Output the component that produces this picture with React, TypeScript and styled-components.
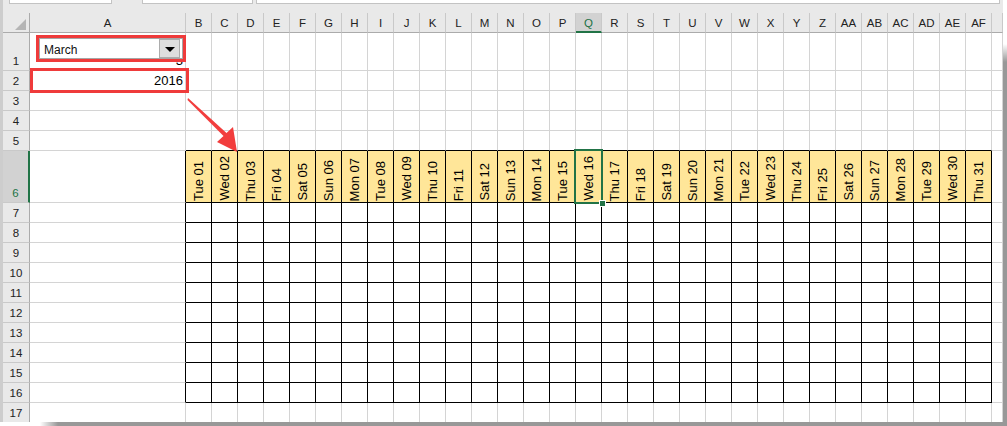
import React from "react";
import styled, { createGlobalStyle } from "styled-components";

const GlobalStyle = createGlobalStyle`
  html, body {
    margin: 0;
    padding: 0;
    background: #fff;
  }
  body {
    font-family: "Liberation Sans", Arial, sans-serif;
  }
`;

const LETTERS = "ABCDEFGHIJKLMNOPQRSTUVWXYZ".split("");
const COLUMNS = [...LETTERS, "AA", "AB", "AC", "AD", "AE", "AF", ""];
const ROWS = Array.from({ length: 17 }, (_, i) => i + 1);
const WEEKDAYS = ["Sun", "Mon", "Tue", "Wed", "Thu", "Fri", "Sat"];

// March 1st 2016 was a Tuesday
const dayLabel = (day: number) =>
  `${WEEKDAYS[(day + 1) % 7]} ${String(day).padStart(2, "0")}`;

const GRID = "#d4d4d4";
const INK = "#000";
const GREEN = "#217346";
const RED = "#ef3b3b";

const Frame = styled.div`
  position: relative;
  width: 1007px;
  height: 426px;
  background: #fff;
  overflow: hidden;

  &::after {
    content: "";
    position: absolute;
    right: 0;
    top: 44px;
    bottom: 0;
    width: 4px;
    background: linear-gradient(to bottom, rgba(150, 150, 150, 0), #989898 18px);
  }

  &::before {
    content: "";
    position: absolute;
    left: 40px;
    right: 0;
    bottom: 0;
    height: 4px;
    background: linear-gradient(to right, rgba(150, 150, 150, 0), #989898 18px);
  }
`;

const Window = styled.div`
  position: relative;
  display: flex;
  width: 1003px;
  height: 422px;
  overflow: hidden;
  background: #fff;
`;

const LeftStrip = styled.div`
  width: 3px;
  flex: none;
  background: #cdcdcd;
`;

const Main = styled.div`
  flex: 1;
  display: flex;
  flex-direction: column;
  min-width: 0;
`;

const TopStrip = styled.div`
  height: 13px;
  flex: none;
  display: flex;
  align-items: flex-start;
  background: #e9e9e9;
`;

const BarBox = styled.div<{ $left: number; $width?: number }>`
  height: 3px;
  margin-left: ${(p) => p.$left}px;
  ${(p) => (p.$width ? `width: ${p.$width}px;` : "flex: 1; margin-right: 3px;")}
  background: #fff;
  border: 1px solid #c3c3c3;
  border-top: none;
`;

const Sheet = styled.div`
  display: grid;
  grid-template-columns: 27px 156px repeat(31, 26px) 1fr;
  grid-template-rows: 20px 38px repeat(4, 20px) 52px repeat(11, 20px);
`;

const Corner = styled.div`
  box-sizing: border-box;
  background: #e9e9e9;
  border-right: 1px solid #ababab;
  border-bottom: 1px solid #ababab;
  display: flex;
  align-items: flex-end;
  justify-content: flex-end;
  padding: 0 3px 2px 0;
`;

const ColHead = styled.div<{ $active?: boolean }>`
  box-sizing: border-box;
  background: ${(p) => (p.$active ? "#d2d2d2" : "#e9e9e9")};
  border-right: 1px solid #c9c9c9;
  border-bottom: ${(p) => (p.$active ? `2px solid ${GREEN}` : "1px solid #ababab")};
  color: ${(p) => (p.$active ? GREEN : "#222")};
  font-size: 11.5px;
  display: flex;
  align-items: center;
  justify-content: center;
  padding-top: ${(p) => (p.$active ? "1px" : "0")};
`;

const RowHead = styled.div<{ $active?: boolean }>`
  box-sizing: border-box;
  background: ${(p) => (p.$active ? "#d2d2d2" : "#e9e9e9")};
  border-right: ${(p) => (p.$active ? `2px solid ${GREEN}` : "1px solid #ababab")};
  border-bottom: 1px solid #c9c9c9;
  color: ${(p) => (p.$active ? GREEN : "#222")};
  font-size: 11.5px;
  line-height: 12px;
  display: flex;
  align-items: flex-end;
  justify-content: center;
  padding-bottom: 3px;
`;

const Cell = styled.div<{ $right?: string; $bottom?: string; $fill?: string }>`
  position: relative;
  box-sizing: border-box;
  min-width: 0;
  background: ${(p) => p.$fill ?? "#fff"};
  border-right: 1px solid ${(p) => p.$right ?? GRID};
  border-bottom: 1px solid ${(p) => p.$bottom ?? GRID};
  color: #000;
  font-size: 13px;
  line-height: 15px;
  display: flex;
  align-items: flex-end;
  justify-content: flex-end;
  padding: 0 2px 2px 0;
`;

const DayCell = styled(Cell)`
  justify-content: center;
  padding: 0 0 1px 0;
`;

const DayLabel = styled.span`
  writing-mode: vertical-rl;
  transform: rotate(180deg);
  white-space: nowrap;
  font-size: 13px;
  line-height: 14px;
`;

const ComboFrame = styled.div`
  position: absolute;
  left: 6px;
  top: 2px;
  width: 150px;
  height: 27px;
  box-sizing: border-box;
  border: 3px solid ${RED};
  z-index: 2;
`;

const Combo = styled.div`
  box-sizing: border-box;
  height: 100%;
  display: flex;
  align-items: center;
  background: #fff;
  border: 1px solid #a6a6a6;
  padding-left: 4px;
  font-size: 12px;
  color: #111;
`;

const ComboText = styled.span`
  flex: 1;
  padding-top: 3px;
`;

const ComboButton = styled.div`
  box-sizing: border-box;
  width: 21px;
  height: 19px;
  margin-right: 2px;
  background: #dedede;
  border: 1px solid #acacac;
  display: flex;
  align-items: center;
  justify-content: center;

  &::before {
    content: "";
    border-left: 5px solid transparent;
    border-right: 5px solid transparent;
    border-top: 5px solid #000;
    margin-top: 1px;
  }
`;

const YearFrame = styled.div`
  position: absolute;
  left: 0;
  top: -3px;
  width: 159px;
  height: 25px;
  box-sizing: border-box;
  border: 3px solid ${RED};
  z-index: 2;
`;

const Selection = styled.div`
  position: absolute;
  left: -2px;
  top: -2px;
  width: 29px;
  height: 55px;
  box-sizing: border-box;
  border: 2px solid ${GREEN};
  z-index: 2;

  &::after {
    content: "";
    position: absolute;
    right: -5px;
    bottom: -5px;
    width: 5px;
    height: 5px;
    background: ${GREEN};
    border: 1px solid #fff;
  }
`;

const Overlay = styled.svg`
  position: absolute;
  left: 0;
  top: 0;
  width: 1003px;
  height: 422px;
  pointer-events: none;
  z-index: 3;
`;

const ACTIVE_COL = "Q";
const ACTIVE_ROW = 6;

const isTableCol = (ci: number) => ci >= 1 && ci <= 31; // B..AF
const isTableRow = (r: number) => r >= 6 && r <= 16;

const renderCell = (r: number, ci: number) => {
  const col = COLUMNS[ci];
  const right = isTableRow(r) && ci >= 0 && ci <= 31 ? INK : undefined;
  const bottom = isTableCol(ci) && r >= 5 && r <= 16 ? INK : undefined;
  const key = `${col || "AG"}${r}`;

  if (r === 6 && isTableCol(ci)) {
    return (
      <DayCell key={key} $right={right} $bottom={bottom} $fill="#ffe699">
        <DayLabel>{dayLabel(ci)}</DayLabel>
        {col === ACTIVE_COL && <Selection />}
      </DayCell>
    );
  }

  if (ci === 0 && r === 1) {
    return (
      <Cell key={key} $right={right} $bottom={bottom}>
        3
        <ComboFrame>
          <Combo>
            <ComboText>March</ComboText>
            <ComboButton />
          </Combo>
        </ComboFrame>
      </Cell>
    );
  }

  if (ci === 0 && r === 2) {
    return (
      <Cell key={key} $right={right} $bottom={bottom}>
        2016
        <YearFrame />
      </Cell>
    );
  }

  return <Cell key={key} $right={right} $bottom={bottom} />;
};

const App = () => {
  return (
    <>
      <GlobalStyle />
      <Frame>
        <Window>
          <LeftStrip />
          <Main>
            <TopStrip>
              <BarBox $left={6} $width={101} />
              <BarBox $left={30} $width={109} />
              <BarBox $left={3} />
            </TopStrip>
            <Sheet>
              <Corner>
                <svg width="11" height="11" viewBox="0 0 11 11">
                  <polygon points="11,0 11,11 0,11" fill="#b5b5b5" />
                </svg>
              </Corner>
              {COLUMNS.map((c, i) => (
                <ColHead key={`h${i}`} $active={c === ACTIVE_COL}>
                  {c}
                </ColHead>
              ))}
              {ROWS.map((r) => (
                <React.Fragment key={`r${r}`}>
                  <RowHead $active={r === ACTIVE_ROW}>{r}</RowHead>
                  {COLUMNS.map((_, ci) => renderCell(r, ci))}
                </React.Fragment>
              ))}
            </Sheet>
          </Main>
          <Overlay viewBox="0 0 1003 422">
            <polygon
              points="188,98 226.5,133 233,127 237,152 217,142 223.5,136 187.5,100"
              fill="#f23d3d"
            />
          </Overlay>
        </Window>
      </Frame>
    </>
  );
};

export default App;
